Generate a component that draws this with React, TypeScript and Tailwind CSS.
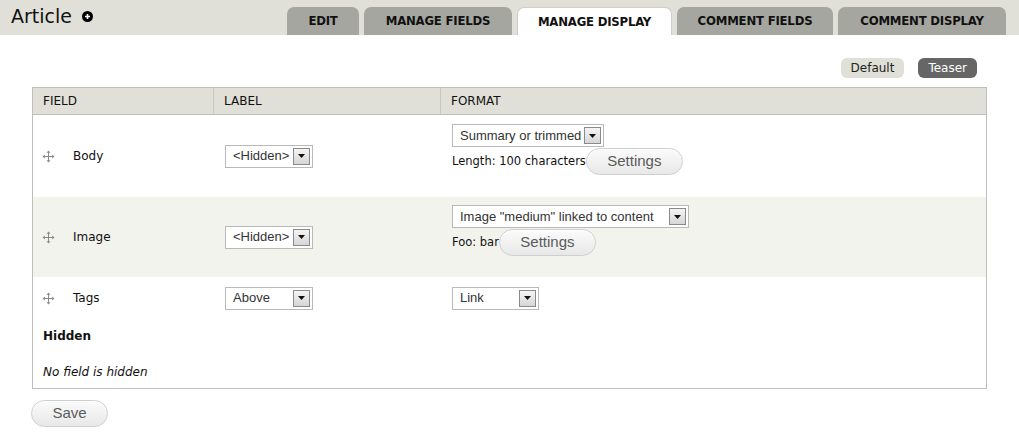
import React from 'react'

const tabs = [
  { label: 'EDIT', w: 'w-[72px]' },
  { label: 'MANAGE FIELDS', w: 'w-[148px]' },
  { label: 'MANAGE DISPLAY', w: 'w-[155px]', active: true },
  { label: 'COMMENT FIELDS', w: 'w-[156px]' },
  { label: 'COMMENT DISPLAY', w: 'w-[168px]' },
]

const Grip = () => (
  <svg width="13" height="13" viewBox="0 0 13 13" className="text-[#8a8a8a]">
    <path d="M6.5 0.5 L4.5 2.8 H8.5 Z M6.5 12.5 L4.5 10.2 H8.5 Z M0.5 6.5 L2.8 4.5 V8.5 Z M12.5 6.5 L10.2 4.5 V8.5 Z" fill="currentColor" />
    <path d="M6.5 2 V11 M2 6.5 H11" stroke="currentColor" strokeWidth="1" />
  </svg>
)

const Select = ({ text, width }: { text: string; width: string }) => (
  <div className={`flex items-center justify-between h-[23px] border border-[#b9b9b9] bg-white pl-[7px] pr-[2px] ${width}`}>
    <span className="text-[13px] text-[#333] font-['Liberation_Sans',sans-serif] whitespace-nowrap">{text}</span>
    <span className="flex items-center justify-center w-[17px] h-[17px] border border-[#8a8a8a] bg-gradient-to-b from-[#f4f4f4] to-[#d6d6d6]">
      <svg width="7" height="4" viewBox="0 0 7 4"><path d="M0 0 H7 L3.5 4 Z" fill="#111" /></svg>
    </span>
  </div>
)

const PillButton = ({ children, width }: { children: React.ReactNode; width: string }) => (
  <button className={`h-[27px] ${width} rounded-full border border-[#cfcfcf] bg-gradient-to-b from-[#fbfbfb] to-[#e8e8e8] text-[15px] text-[#5a5a5a] font-['Liberation_Sans',sans-serif] shadow-[0_1px_0_#fff_inset]`}>
    {children}
  </button>
)

const FieldCell = ({ name }: { name: string }) => (
  <div className="flex items-center gap-[18px] pl-[9px]">
    <Grip />
    <span className="text-[12px] text-[#111]">{name}</span>
  </div>
)

export default function App() {
  return (
    <div className="w-[1019px] h-[436px] bg-white font-['DejaVu_Sans',Verdana,sans-serif] text-[#222] overflow-hidden">
      {/* header with title and tabs */}
      <div className="h-[35px] bg-[#e0e0d8] flex items-end justify-between pl-[11px] pr-[13px]">
        <div className="self-start flex items-center gap-[10px] pt-[3px]">
          <h1 className="text-[19px] text-[#111] font-normal leading-[26px]">Article</h1>
          <span className="w-[11px] h-[11px] rounded-full bg-black flex items-center justify-center">
            <svg width="7" height="7" viewBox="0 0 7 7"><path d="M3.5 1 V6 M1 3.5 H6" stroke="#fff" strokeWidth="1.6" /></svg>
          </span>
        </div>
        <div className="flex gap-[5px]">
          {tabs.map((t) => (
            <div
              key={t.label}
              className={`h-[28px] ${t.w} rounded-t-[7px] flex items-center justify-center text-[13px] font-bold text-[#111] font-['DejaVu_Sans_Condensed','DejaVu_Sans',sans-serif] tracking-[-0.2px] ${
                t.active ? 'bg-white border border-b-0 border-[#cfcfc7]' : 'bg-[#a6a6a0]'
              }`}
            >
              {t.label}
            </div>
          ))}
        </div>
      </div>

      <div className="px-[32px]">
        {/* view mode switch */}
        <div className="flex justify-end gap-[14px] pt-[23px] pr-[10px]">
          <span className="h-[20px] px-[10px] rounded-[6px] bg-[#e0e0d8] text-[12px] text-[#222] flex items-center">Default</span>
          <span className="h-[20px] px-[10px] rounded-[6px] bg-[#666] text-[12px] text-white flex items-center">Teaser</span>
        </div>

        {/* fields table */}
        <div className="mt-[9px] border border-[#bebebe] w-[955px]">
          <div className="grid grid-cols-[181px_227px_1fr] h-[27px] bg-[#e0e0d8] border-b border-[#bebebe] text-[12px] text-[#111]">
            <div className="flex items-center pl-[10px] border-r border-[#c9c9c1]">FIELD</div>
            <div className="flex items-center pl-[10px] border-r border-[#c9c9c1]">LABEL</div>
            <div className="flex items-center pl-[10px]">FORMAT</div>
          </div>

          <div className="grid grid-cols-[181px_227px_1fr] h-[82px] items-center">
            <FieldCell name="Body" />
            <div className="pl-[11px]"><Select text="<Hidden>" width="w-[88px]" /></div>
            <div className="self-start pt-[9px] pl-[11px] flex flex-col gap-[1px]">
              <Select text="Summary or trimmed" width="w-[152px]" />
              <div className="flex items-center text-[11.5px] text-[#111]">
                <span>Length: 100 characters</span>
                <PillButton width="w-[97px]">Settings</PillButton>
              </div>
            </div>
          </div>

          <div className="grid grid-cols-[181px_227px_1fr] h-[80px] items-center bg-[#f3f3ee]">
            <FieldCell name="Image" />
            <div className="pl-[11px]"><Select text="<Hidden>" width="w-[88px]" /></div>
            <div className="self-start pt-[8px] pl-[11px] flex flex-col gap-[1px]">
              <Select text={'Image "medium" linked to content'} width="w-[237px]" />
              <div className="flex items-center text-[11.5px] text-[#111]">
                <span>Foo: bar</span>
                <PillButton width="w-[97px]">Settings</PillButton>
              </div>
            </div>
          </div>

          <div className="grid grid-cols-[181px_227px_1fr] h-[42px] items-center">
            <FieldCell name="Tags" />
            <div className="pl-[11px]"><Select text="Above" width="w-[88px]" /></div>
            <div className="pl-[11px]"><Select text="Link" width="w-[87px]" /></div>
          </div>

          <div className="pl-[10px] pt-[8px] pb-[7px] text-[12px] text-[#111]">
            <h2 className="font-bold">Hidden</h2>
            <p className="italic mt-[18px]">No field is hidden</p>
          </div>
        </div>

        <div className="mt-[11px] -ml-[1px]">
          <PillButton width="w-[77px]">Save</PillButton>
        </div>
      </div>
    </div>
  )
}
